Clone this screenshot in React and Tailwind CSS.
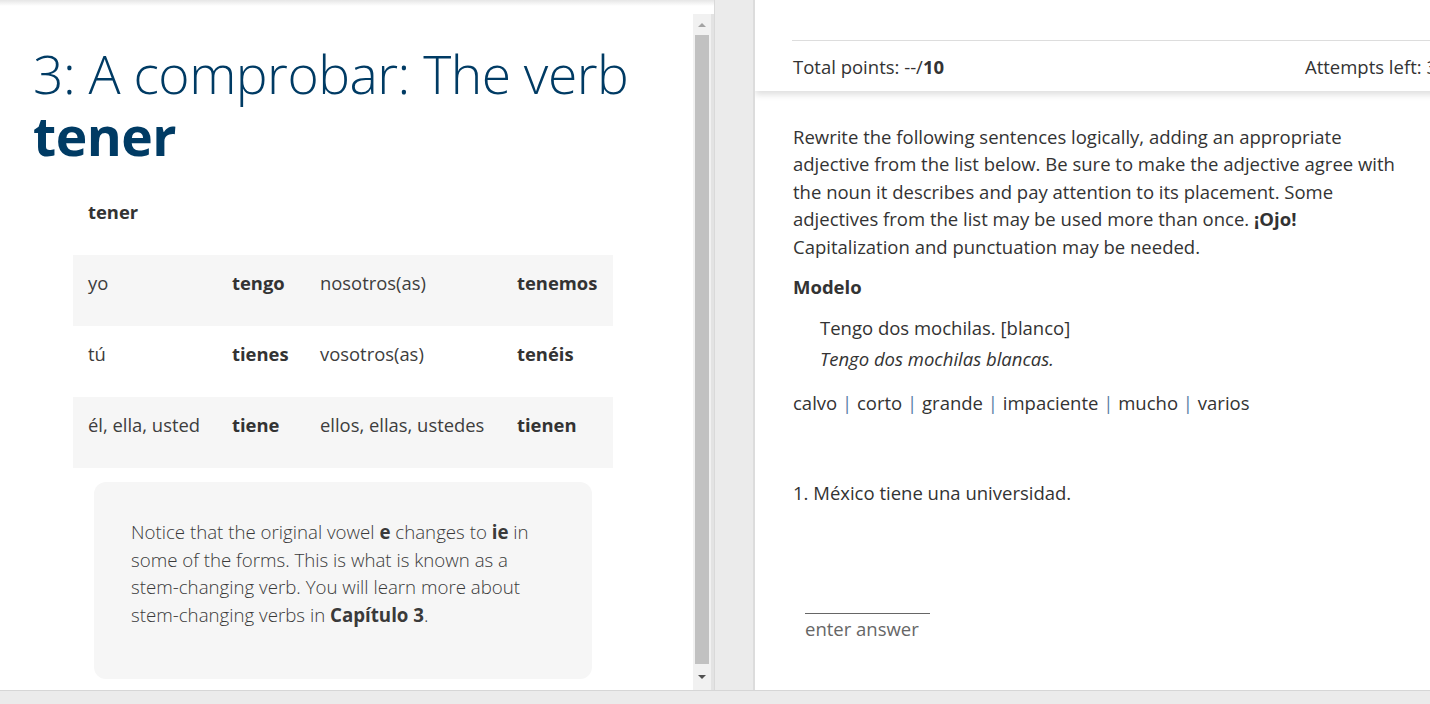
import React from 'react';

const rows = [
  ['yo', 'tengo', 'nosotros(as)', 'tenemos', true],
  ['tú', 'tienes', 'vosotros(as)', 'tenéis', false],
  ['él, ella, usted', 'tiene', 'ellos, ellas, ustedes', 'tienen', true],
];

const adjectives = ['calvo', 'corto', 'grande', 'impaciente', 'mucho', 'varios'];

function Scrollbar() {
  return (
    <div className="flex flex-col w-[21px] shrink-0 bg-[#f1f1f1] mt-[14px] border-r-[3px] border-[#e3e3e3]">
      <div className="h-[21px] flex items-center justify-center">
        <div className="w-0 h-0 border-l-[4px] border-r-[4px] border-b-[4px] border-l-transparent border-r-transparent border-b-[#a3a3a3]" />
      </div>
      <div className="flex-1 mx-[2px] bg-[#c1c1c1]" />
      <div className="h-[26px] flex items-center justify-center">
        <div className="w-0 h-0 border-l-[4px] border-r-[4px] border-t-[4px] border-l-transparent border-r-transparent border-t-[#505050]" />
      </div>
    </div>
  );
}

function LessonPanel() {
  return (
    <div className="relative flex w-[715px] shrink-0 bg-white border-r border-[#d9d9d9] overflow-hidden">
      <div className="absolute top-0 left-0 right-0 h-[6px] bg-linear-to-b from-[#e6e6e6] to-white" />
      <div className="flex-1 pl-[33px] pt-[43px]">
        <h1 className="text-[53.4px] leading-[62px] font-light text-[#003b64] tracking-[-0.5px]">
          3: A comprobar: The verb <span className="font-bold">tener</span>
        </h1>

        <div className="ml-[40px] mt-[11px] w-[540px] text-[18.4px] leading-[27px] text-[#3d3d3d]">
          <div className="h-[77px] flex items-center px-[15px] pb-[10px] font-bold text-[#333]">tener</div>
          {rows.map(([a, b, c, d, shade]) => (
            <div
              key={a}
              className={`grid grid-cols-[144px_88px_197px_111px] h-[71px] items-start pt-[14px] ${shade ? 'bg-[#f6f6f6]' : 'bg-white'}`}
            >
              <div className="px-[15px]">{a}</div>
              <div className="px-[15px] font-bold text-[#333]">{b}</div>
              <div className="px-[15px]">{c}</div>
              <div className="px-[15px] font-bold text-[#333]">{d}</div>
            </div>
          ))}

          <div className="ml-[21px] mt-[14px] w-[498px] rounded-[12px] bg-[#f6f6f6] pl-[37px] pr-[50px] pt-[36px] pb-[50px] text-[18.7px] leading-[27.7px] font-light text-[#3a3a3a]">
            Notice that the original vowel <b className="font-bold">e</b> changes to <b className="font-bold">ie</b> in
            some of the forms. This is what is known as a stem-changing verb. You will learn more about
            stem-changing verbs in <b className="font-bold">Capítulo 3</b>.
          </div>
        </div>
      </div>
      <Scrollbar />
    </div>
  );
}

function ActivityPanel() {
  return (
    <div className="relative w-[700px] shrink-0 bg-white border-l-2 border-[#dcdcdc] overflow-hidden text-[#333]">
      <div className="absolute -top-[10px] right-[10px] w-[14px] h-[14px] rounded-full border-[3px] border-[#1a73c8]" />
      <div className="h-[91px] pt-[40px] pl-[37px] shadow-[0_4px_6px_rgba(0,0,0,0.12)] relative z-10 bg-white">
        <div className="h-[51px] border-t border-[#dddddd] flex items-center justify-between pl-[1px] pr-[16px] text-[18.5px] pt-[2px]">
          <span>
            Total points: --/<b className="font-bold">10</b>
          </span>
          <span className="whitespace-nowrap">Attempts left: 3</span>
        </div>
      </div>

      <div className="pl-[38px] pt-[32px] text-[18.5px] leading-[27.4px]">
        <p className="w-[625px]">
          Rewrite the following sentences logically, adding an appropriate adjective from the list below. Be sure
          to make the adjective agree with the noun it describes and pay attention to its placement. Some
          adjectives from the list may be used more than once. <b className="font-bold">¡Ojo!</b> Capitalization and
          punctuation may be needed.
        </p>

        <p className="mt-[13px] font-bold">Modelo</p>
        <div className="mt-[12px] pl-[27px] leading-[31px]">
          <p>Tengo dos mochilas. [blanco]</p>
          <p className="italic">Tengo dos mochilas blancas.</p>
        </div>

        <p className="mt-[15px]">
          {adjectives.map((w, i) => (
            <span key={w}>
              {i > 0 && <span className="text-[#5b7fa6]"> | </span>}
              {w}
            </span>
          ))}
        </p>

        <p className="mt-[62px]">1. México tiene una universidad.</p>

        <div className="ml-[12px] mt-[107px] w-[125px] border-t border-[#666]">
          <span className="block pt-[1px] text-[#666]">enter answer</span>
        </div>
      </div>
    </div>
  );
}

export default function App() {
  return (
    <div className="w-[1430px] h-[704px] overflow-hidden bg-[#ebebeb] font-['Open_Sans',sans-serif]">
      <div className="flex h-[690px]">
        <LessonPanel />
        <div className="w-[38px] shrink-0 bg-[#ebebeb]" />
        <ActivityPanel />
      </div>
      <div className="h-[14px] border-t border-[#d6d6d6] bg-[#ebebeb]" />
    </div>
  );
}
